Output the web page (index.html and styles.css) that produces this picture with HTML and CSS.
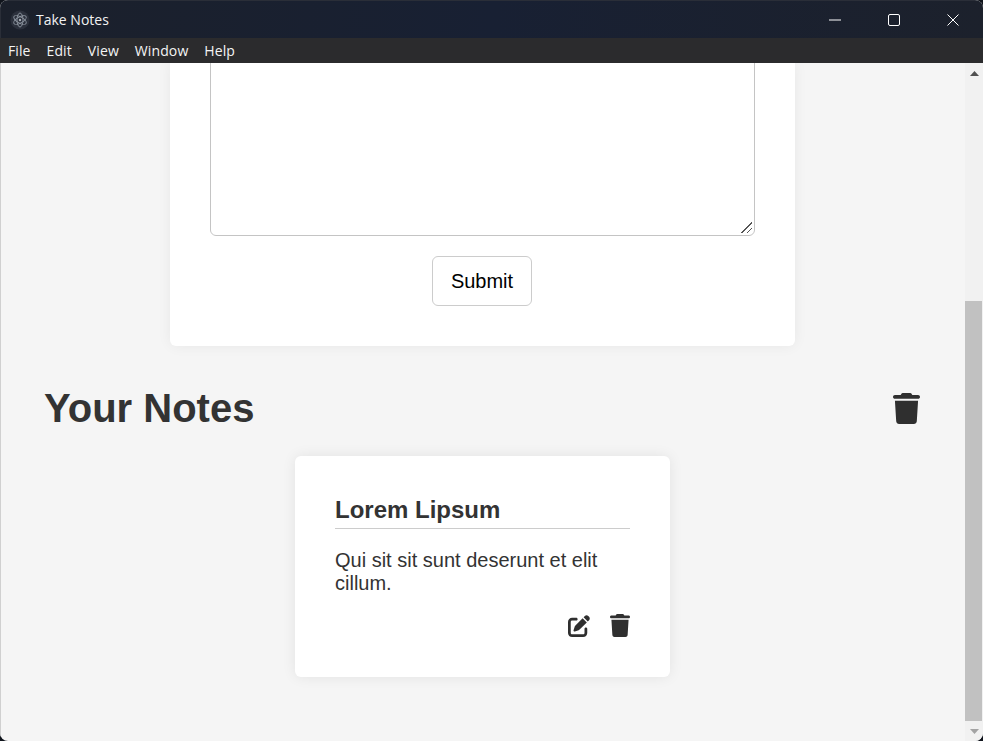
FILE: index.html
```html
<!DOCTYPE html>
<html lang="en">
<head>
<meta charset="utf-8">
<title>Take Notes</title>
<link rel="stylesheet" href="styles.css">
</head>
<body>
<div class="window">
  <header class="titlebar">
    <div class="title-left">
      <svg class="app-icon" viewBox="0 0 20 20" aria-hidden="true">
        <circle cx="10" cy="10" r="9.5" fill="#2b303c"/>
        <g fill="none" stroke="#8d95a0" stroke-width=".9">
          <ellipse cx="10" cy="10" rx="7" ry="3" transform="rotate(30 10 10)"/>
          <ellipse cx="10" cy="10" rx="7" ry="3" transform="rotate(90 10 10)"/>
          <ellipse cx="10" cy="10" rx="7" ry="3" transform="rotate(150 10 10)"/>
        </g>
        <circle cx="10" cy="10" r="1.2" fill="#a6adb6"/>
      </svg>
      <span class="app-title">Take Notes</span>
    </div>
    <div class="controls">
      <span class="control">
        <svg viewBox="0 0 12 12" class="ctl"><path d="M0 6h12" stroke="#fff" fill="none"/></svg>
      </span>
      <span class="control">
        <svg viewBox="0 0 12 12" class="ctl"><rect x=".5" y=".5" width="11" height="11" rx="1.5" stroke="#fff" fill="none"/></svg>
      </span>
      <span class="control">
        <svg viewBox="0 0 12 12" class="ctl"><path d="M.5.5l11 11M11.5.5l-11 11" stroke="#fff" fill="none"/></svg>
      </span>
    </div>
  </header>
  <nav class="menubar">
    <span class="menu-item">File</span>
    <span class="menu-item">Edit</span>
    <span class="menu-item">View</span>
    <span class="menu-item">Window</span>
    <span class="menu-item">Help</span>
  </nav>
  <div class="viewport">
    <main class="content">
      <section class="form-card">
        <textarea class="note-input" aria-label="Note"></textarea>
        <button class="submit" type="button">Submit</button>
      </section>
      <div class="notes-head">
        <h1 class="notes-title">Your Notes</h1>
        <svg class="icon-large" viewBox="0 0 448 512"><use href="#trash"/></svg>
      </div>
      <article class="note-card">
        <h2 class="note-title">Lorem Lipsum</h2>
        <p class="note-body">Qui sit sit sunt deserunt et elit cillum.</p>
        <div class="note-actions">
          <svg class="icon-edit" viewBox="0 0 512 512"><path d="M471.6 21.7c-21.9-21.9-57.3-21.9-79.2 0L362.3 51.7l97.9 97.9 30.1-30.1c21.9-21.9 21.9-57.3 0-79.2L471.6 21.7zm-299.2 220c-6.1 6.1-10.8 13.6-13.5 21.9l-29.6 88.8c-2.9 8.6-.6 18.1 5.8 24.6s15.9 8.7 24.6 5.8l88.8-29.6c8.2-2.7 15.7-7.4 21.9-13.5L437.7 172.3 339.7 74.3 172.4 241.7zM96 64C43 64 0 107 0 160V416c0 53 43 96 96 96H352c53 0 96-43 96-96V320c0-17.7-14.3-32-32-32s-32 14.3-32 32v96c0 17.7-14.3 32-32 32H96c-17.7 0-32-14.3-32-32V160c0-17.7 14.3-32 32-32h96c17.7 0 32-14.3 32-32s-14.3-32-32-32H96z"/></svg>
          <svg class="icon-trash" viewBox="0 0 448 512"><use href="#trash"/></svg>
        </div>
      </article>
    </main>
    <aside class="scrollbar">
      <svg class="arrow" viewBox="0 0 9 5"><path d="M4.5 0L9 5H0z" fill="#505050"/></svg>
      <div class="track"><div class="thumb"></div></div>
      <svg class="arrow" viewBox="0 0 9 5"><path d="M0 0h9L4.5 5z" fill="#a3a3a3"/></svg>
    </aside>
  </div>
</div>
<svg class="defs" aria-hidden="true"><defs><path id="trash" d="M135.2 17.7L128 32H32C14.3 32 0 46.3 0 64S14.3 96 32 96H416c17.7 0 32-14.3 32-32s-14.3-32-32-32H320l-7.2-14.3C307.4 6.8 296.3 0 284.2 0H163.8c-12.1 0-23.2 6.8-28.6 17.7zM416 128H32L53.2 467c1.6 25.3 22.6 45 47.9 45H346.9c25.3 0 46.3-19.7 47.9-45L416 128z"/></defs></svg>
</body>
</html>
```
FILE: styles.css
```css
* { box-sizing: border-box; }
html, body { margin: 0; height: 100%; overflow: hidden; background: #10141c; }
.defs { display: none; }
.window {
  width: 983px; height: 741px; display: flex; flex-direction: column;
  border-radius: 8px; overflow: hidden; background: #f5f5f5;
  font-family: "Liberation Sans", Arial, sans-serif; color: #333;
}
.titlebar {
  height: 38px; flex: none; display: flex; justify-content: space-between; align-items: center;
  background: linear-gradient(90deg, #1b202b, #182033 50%, #1c212c);
  border-top: 1px solid #2a2e38; border-left: 1px solid #2a2e38;
}
.title-left { display: flex; align-items: center; gap: 6px; padding-left: 9px; }
.app-icon { width: 20px; height: 20px; display: block; }
.app-title { font: 14px "Open Sans", sans-serif; color: #f2f2f2; }
.controls { display: flex; padding-right: 1px; }
.control { width: 59px; height: 37px; display: flex; align-items: center; justify-content: center; }
.ctl { width: 12px; height: 12px; display: block; }
.menubar {
  height: 25px; flex: none; display: flex; gap: 16px; padding-left: 8px; align-items: center;
  background: #2b2b2d; font: 14px "Open Sans", sans-serif; color: #f4f4f4; letter-spacing: .1px;
}
.viewport { flex: 1; display: flex; min-height: 0; box-shadow: inset 1px 0 0 #d0d0d0; }
.content { width: 965px; flex: none; display: flex; flex-direction: column; align-items: center; overflow: hidden; }
.form-card {
  width: 625px; height: 283px; flex: none; background: #fff; border-radius: 0 0 6px 6px;
  box-shadow: 0 0 14px rgba(0,0,0,.06); display: flex; flex-direction: column; align-items: center;
  overflow: hidden;
}
.note-input {
  width: 545px; height: 200px; flex: none; margin-top: -27px; padding: 8px;
  border: 1px solid #c4c4c4; border-radius: 6px; background: #fff; outline: none;
}
.note-input::-webkit-resizer {
  background: linear-gradient(135deg, transparent 49%, #555 49%, #555 57%, transparent 57%, transparent 73%, #555 73%, #555 81%, transparent 81%) 2px 2px / 11px 11px no-repeat;
}
.submit {
  width: 100px; height: 50px; margin: 20px 1px 0 0; flex: none; background: #fff;
  border: 1px solid #ccc; border-radius: 6px; color: #000;
  font: 20px "Liberation Sans", Arial, sans-serif;
}
.notes-head {
  width: 100%; flex: none; display: flex; justify-content: space-between; align-items: flex-start;
  padding: 39px 45px 0 44px; height: 110px;
}
.notes-title { margin: 0; font-size: 40px; line-height: 46px; font-weight: 700; color: #333; }
.icon-large { width: 27px; height: 31px; fill: #2f2f2f; display: block; margin: 8px 0 0; }
.note-card {
  width: 375px; height: 221px; flex: none; background: #fff; border-radius: 6px;
  box-shadow: 0 0 14px rgba(0,0,0,.08); padding: 40px; display: flex; flex-direction: column;
}
.note-title {
  margin: 0; font-size: 24px; line-height: 28px; font-weight: 700; color: #333;
  padding-bottom: 4px; border-bottom: 1px solid #ccc;
}
.note-body { margin: 20px 0 0; font-size: 20px; line-height: 23px; color: #333; }
.note-actions { display: flex; justify-content: flex-end; align-items: center; gap: 20px; margin-top: 19px; }
.icon-edit { width: 22px; height: 22px; fill: #2f2f2f; display: block; }
.icon-trash { width: 20px; height: 23px; fill: #2f2f2f; display: block; }
.scrollbar { flex: 1; display: flex; flex-direction: column; align-items: center; background: #f1f1f1; }
.arrow { width: 9px; height: 5px; flex: none; margin: 8px 0 7px; display: block; }
.track { flex: 1; width: 100%; display: flex; flex-direction: column; justify-content: flex-end; }
.thumb { height: 420px; background: #c1c1c1; margin: 0 1px 0 0; }
```
